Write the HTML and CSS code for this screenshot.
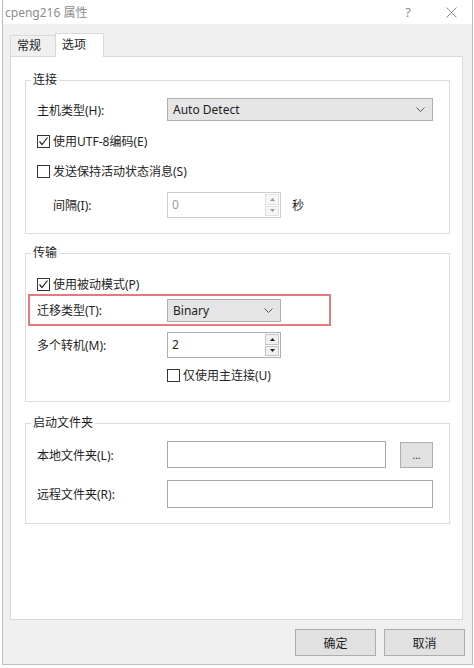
FILE: index.html
```html
<!DOCTYPE html>
<html lang="zh-CN">

<head>
    <meta charset="utf-8">
    <title>cpeng216 属性</title>

    <link rel="stylesheet" href="styles.css">
</head>

<body>
    <div class="window">
        <header class="titlebar">
            <span class="title">cpeng216 属性</span>
            <span class="help">?</span>
            <span class="close">
                <svg width="11" height="11" viewBox="0 0 11 11">
                    <path d="M0.5 0.5 L10.5 10.5 M10.5 0.5 L0.5 10.5" stroke="#8c8c8c" stroke-width="1" fill="none" />
                </svg>
            </span>
        </header>

        <div class="dialog">
            <div class="tabs">
                <div class="tab">常规</div>
                <div class="tab active">选项</div>
            </div>

            <div class="panel">
                <!-- 连接 -->
                <fieldset class="group group-conn">
                    <legend>连接</legend>
                    <div class="row">
                        <label>主机类型(H):</label>
                        <div class="combo combo-wide">
                            <span>Auto Detect</span>
                            <svg width="9" height="5" viewBox="0 0 9 5">
                                <path d="M0.5 0.5 L4.5 4.5 L8.5 0.5" stroke="#555" fill="none" />
                            </svg>
                        </div>
                    </div>
                    <div class="check-row first">
                        <span class="checkbox checked">
                            <svg width="11" height="11" viewBox="0 0 11 11">
                                <path d="M1.5 5.5 L4 8.5 L9.5 1.5" stroke="#222" stroke-width="1.2" fill="none" />
                            </svg>
                        </span>
                        <span>使用UTF-8编码(E)</span>
                    </div>
                    <div class="check-row">
                        <span class="checkbox"></span>
                        <span>发送保持活动状态消息(S)</span>
                    </div>
                    <div class="row interval-row">
                        <label class="indent">间隔(I):</label>
                        <div class="spin disabled">
                            <span class="spin-value">0</span>
                            <div class="spin-buttons">
                                <span class="spin-btn"><svg width="5" height="3" viewBox="0 0 5 3"><path d="M0 3 L2.5 0 L5 3 Z" fill="#9a9a9a" /></svg></span>
                                <span class="spin-btn"><svg width="5" height="3" viewBox="0 0 5 3"><path d="M0 0 L2.5 3 L5 0 Z" fill="#9a9a9a" /></svg></span>
                            </div>
                        </div>
                        <span class="unit">秒</span>
                    </div>
                </fieldset>

                <!-- 传输 -->
                <fieldset class="group group-trans">
                    <legend>传输</legend>
                    <div class="check-row">
                        <span class="checkbox checked">
                            <svg width="11" height="11" viewBox="0 0 11 11">
                                <path d="M1.5 5.5 L4 8.5 L9.5 1.5" stroke="#222" stroke-width="1.2" fill="none" />
                            </svg>
                        </span>
                        <span>使用被动模式(P)</span>
                    </div>
                    <div class="row highlight">
                        <label>迁移类型(T):</label>
                        <div class="combo combo-short">
                            <span>Binary</span>
                            <svg width="9" height="5" viewBox="0 0 9 5">
                                <path d="M0.5 0.5 L4.5 4.5 L8.5 0.5" stroke="#555" fill="none" />
                            </svg>
                        </div>
                    </div>
                    <div class="row multi-row">
                        <label>多个转机(M):</label>
                        <div class="spin">
                            <span class="spin-value">2</span>
                            <div class="spin-buttons">
                                <span class="spin-btn"><svg width="5" height="3" viewBox="0 0 5 3"><path d="M0 3 L2.5 0 L5 3 Z" fill="#222" /></svg></span>
                                <span class="spin-btn"><svg width="5" height="3" viewBox="0 0 5 3"><path d="M0 0 L2.5 3 L5 0 Z" fill="#222" /></svg></span>
                            </div>
                        </div>
                    </div>
                    <div class="check-row main-only">
                        <span class="checkbox"></span>
                        <span>仅使用主连接(U)</span>
                    </div>
                </fieldset>

                <!-- 启动文件夹 -->
                <fieldset class="group group-dirs">
                    <legend>启动文件夹</legend>
                    <div class="row local-row">
                        <label>本地文件夹(L):</label>
                        <div class="text-input local-input"></div>
                        <button class="browse">...</button>
                    </div>
                    <div class="row remote-row">
                        <label>远程文件夹(R):</label>
                        <div class="text-input remote-input"></div>
                    </div>
                </fieldset>
            </div>

            <div class="buttons">
                <button class="btn">确定</button>
                <button class="btn">取消</button>
            </div>
        </div>
    </div>
</body>

</html>
```

FILE: styles.css
```css
* {
    padding: 0;
    margin: 0;
    box-sizing: border-box;
    font-family: "Noto Sans", "Noto Sans CJK SC", sans-serif;
}

body {
    background-color: #fff;
    color: #1e1e1e;
    font-size: 12px;
}

.window {
    width: 471px;
    height: 665px;
    margin-left: 2px;
    border: 1px solid #bdbdbd;
    border-top: none;
    background-color: #f0f0f0;
}

.titlebar {
    height: 24px;
    display: flex;
    align-items: center;
    background-color: #fff;
    color: #8c8c8c;
}

.title {
    flex: 1;
    padding-left: 2px;
}

.help {
    width: 20px;
    text-align: center;
    font-size: 13px;
}

.close {
    width: 20px;
    margin-left: 23px;
    margin-right: 11px;
    display: flex;
    justify-content: center;
}

.dialog {
    padding: 9px 7px 0 7px;
}

.tabs {
    display: flex;
    align-items: flex-end;
}

.tab {
    height: 21px;
    width: 45px;
    padding-left: 6px;
    line-height: 19px;
    border: 1px solid #d9d9d9;
    border-bottom: none;
    border-right: none;
}

.tab.active {
    position: relative;
    z-index: 1;
    height: 24px;
    width: 49px;
    margin-bottom: -1px;
    line-height: 21px;
    border-right: 1px solid #d9d9d9;
    background-color: #fff;
}

.panel {
    width: 453px;
    height: 564px;
    padding: 15px 11px 0 14px;
    background-color: #fff;
    border: 1px solid #d9d9d9;
}

.group {
    width: 425px;
    border: 1px solid #dcdcdc;
    padding: 10px 11px 15px 11px;
    min-width: 0;
}

.group legend {
    margin-left: -6px;
    padding: 0 2px;
    line-height: 16px;
}

.group-trans {
    margin-top: 11px;
    padding-top: 13px;
    padding-bottom: 16px;
}

.group-dirs {
    margin-top: 13px;
}

.row {
    display: flex;
    align-items: center;
}

.row label {
    width: 130px;
    flex-shrink: 0;
}

.row label.indent {
    padding-left: 16px;
}

.check-row {
    height: 20px;
    display: flex;
    align-items: center;
    gap: 3px;
}

.check-row.first {
    margin-top: 10px;
}

.group-conn .check-row + .check-row {
    margin-top: 10px;
}

.checkbox {
    width: 13px;
    height: 13px;
    border: 1px solid #333;
    background-color: #fff;
    display: flex;
    align-items: center;
    justify-content: center;
}

.combo {
    height: 23px;
    display: flex;
    align-items: center;
    justify-content: space-between;
    padding: 0 7px 0 5px;
    background-color: #e5e5e5;
    border: 1px solid #adadad;
}

.combo-wide {
    width: 266px;
}

.combo-short {
    width: 114px;
}

.interval-row {
    margin-top: 11px;
}

.spin {
    width: 114px;
    height: 26px;
    display: flex;
    border: 1px solid #adadad;
    background-color: #fff;
}

.spin.disabled {
    border-color: #cccccc;
    color: #9a9a9a;
}

.spin-value {
    flex: 1;
    padding: 3px 0 0 4px;
}

.spin-buttons {
    width: 17px;
    display: flex;
    flex-direction: column;
    gap: 1px;
    padding: 1px 1px 1px 2px;
}

.spin-btn {
    flex: 1;
    display: flex;
    align-items: center;
    justify-content: center;
    background-color: #f0f0f0;
    border: 1px solid #c4c4c4;
}

.spin.disabled .spin-btn {
    background-color: #f6f6f6;
    border-color: #e0e0e0;
}

.unit {
    margin-left: 11px;
}

.highlight {
    height: 32px;
    width: 303px;
    margin-left: -9px;
    padding-left: 7px;
    border: 2px solid #e5797f;
}

.multi-row {
    margin-top: 6px;
}

.main-only {
    margin-top: 7px;
    padding-left: 130px;
}

.text-input {
    height: 27px;
    border: 1px solid #a8a8a8;
    background-color: #fff;
}

.local-input {
    width: 219px;
}

.browse {
    width: 33px;
    height: 26px;
    margin-left: 14px;
    background-color: #e1e1e1;
    border: 1px solid #adadad;
    font-size: 10px;
    color: #333;
}

.remote-row {
    margin-top: 12px;
}

.remote-input {
    width: 266px;
    height: 28px;
}

.buttons {
    margin-top: 9px;
    display: flex;
    justify-content: flex-end;
    gap: 8px;
}

.btn {
    width: 81px;
    height: 27px;
    background-color: #e1e1e1;
    border: 1px solid #adadad;
    font-size: 12px;
    color: #1e1e1e;
}
```
